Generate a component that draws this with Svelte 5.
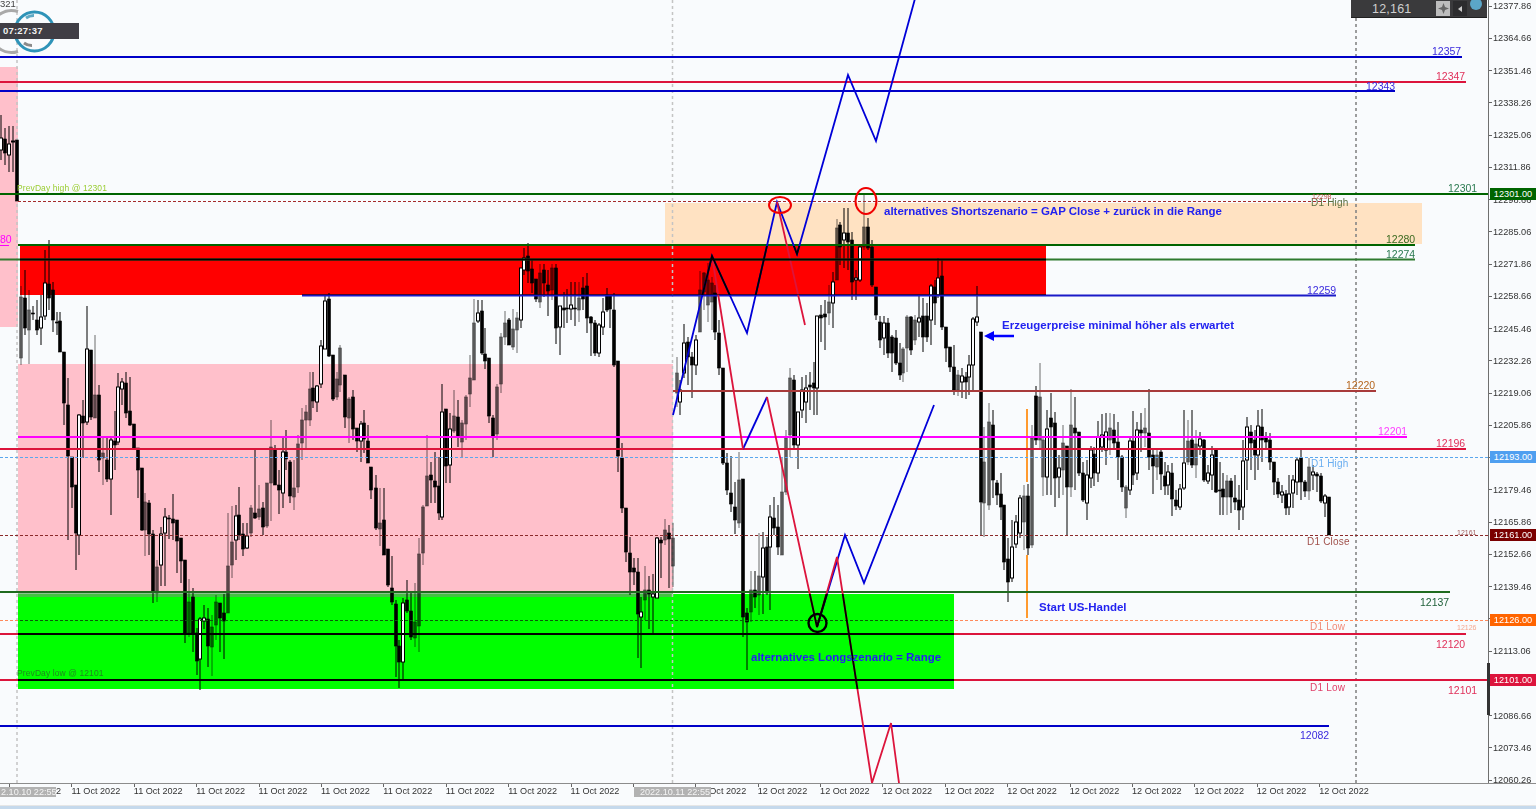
<script lang="ts">
// candles in chart pixels: [x, bodyTop, bodyBottom, kind, wickTop, wickBottom]
// kind 0 = bear (black), 1 = bull (hollow), 2 = grey
const raw: number[][] = [
	[1,138,150,1,115,160],[5,139,153,0,128,165],[9,144,155,1,126,172],[13,141,142,1,126,172],[17,140,201,0],
	[21,297,358,2,286,365],[25,298,328,0,270,335],[29,310,330,2,290,364],[33,313,314,0,306,320],[37,320,330,0,300,335],[41,317,328,1,295,345],[45,283,316,1,250,320],[49,284,298,0,240,310],[53,290,320,0,282,332],[57,322,323,0,312,335],[60,321,352,0,312,350],
	[64,352,403,0,352,425],[68,405,456,0,378,540],[72,457,487,0,457,508],[76,485,533,0,485,570],[79,415,535,1,414,555],[83,416,423,0,400,458],[87,349,422,1,306,425],[91,350,417,0,350,420],[95,395,418,2,335,418],[99,395,460,0,385,472],[103,453,458,2,438,485],[107,460,479,0,438,482],[111,440,479,1,438,515],[115,441,445,0,411,470],[118,387,442,1,373,445],[122,382,389,1,378,405],[126,383,413,0,372,418],[130,411,425,0,377,426],[134,424,448,0,424,450],[138,448,470,0,448,498],
	[142,468,530,0,468,531],[145,502,530,2,493,556],[149,503,534,0,500,555],[153,534,592,0,530,603],[157,567,593,2,560,602],[161,534,565,1,527,586],[165,517,533,1,508,586],[169,518,519,0,515,539],[173,519,523,0,494,540],[177,520,541,0,520,573],[181,538,561,0,538,583],[185,560,633,0,560,643],[189,602,633,2,579,637],[193,597,633,0,588,652],[197,633,661,0,628,675],[200,619,659,1,617,690],[204,618,621,1,605,629],[208,619,646,0,608,667],[212,627,647,2,615,676],[216,602,625,2,595,640],[220,603,618,0,603,652],[224,613,621,0,594,659],[228,566,613,2,513,613],[232,542,565,2,506,578],[236,516,540,1,505,560],[239,515,535,0,487,540],[243,534,549,0,523,556],[247,536,548,1,523,549],[251,508,533,2,505,537],[255,513,518,0,450,519],[259,509,517,2,485,520],[263,508,527,0,502,535],[267,483,526,2,483,528],[271,447,483,2,420,521],[275,449,485,0,445,485],[279,485,490,0,470,514],[283,452,493,1,437,508],[286,452,459,0,430,470],[290,462,496,0,460,503],[294,488,497,2,460,510],[298,444,487,2,435,493],[302,420,443,2,408,460],[306,412,420,2,405,450],
	[310,389,420,2,372,426],[313,388,401,0,372,408],[317,386,402,1,385,412],[321,346,384,1,340,388],[325,301,349,1,296,349],[329,299,356,0,293,357],[333,355,399,0,355,401],[337,379,397,2,372,400],[340,348,385,2,345,392],
	[345,375,417,0,375,428],[349,399,418,2,397,443],[353,397,429,0,390,440],[357,428,441,0,428,452],[361,424,441,1,421,462],[364,423,439,0,410,453],[368,441,463,0,425,463],
	[371,467,490,0,467,499],[376,488,528,0,475,530],[380,523,529,2,488,546],[384,520,555,0,488,555],[388,549,585,0,549,587],[392,588,602,0,556,605],[396,604,646,0,600,677],[399,646,662,0,640,688],[403,603,662,1,598,680],[407,600,611,0,580,613],[411,611,637,0,593,640],[415,622,638,2,583,647],[419,554,626,2,538,652],[423,507,553,2,505,565],[427,476,506,2,435,506],
	[431,475,480,0,462,503],[435,481,487,0,452,503],[439,486,513,0,457,520],[442,412,517,1,384,520],[446,409,466,0,409,483],[450,429,465,1,413,483],[454,416,431,2,390,433],[458,417,437,0,400,447],[462,423,442,2,420,457],[466,397,424,2,395,440],[470,378,394,2,355,407],[474,323,380,2,299,380],[478,313,321,1,300,323],[482,311,353,0,300,355],[485,354,361,0,328,369],[489,358,416,0,358,423],[493,418,436,0,415,457],[497,387,434,2,384,440],[501,337,384,2,333,393],[505,323,337,2,311,345],[509,320,345,0,318,345],[513,329,347,2,309,350],[517,318,330,2,312,353],[521,268,320,1,268,328],[524,258,270,1,248,275],[528,256,271,0,243,283],[532,269,283,0,259,293],[536,279,299,0,279,302],[540,273,302,2,264,308],[544,270,283,0,264,297],[548,285,291,0,270,316],[552,268,290,2,264,300],[556,268,328,0,264,344],[560,306,327,1,306,355],
	[564,308,310,0,292,328],[567,308,309,0,289,323],[571,305,309,1,282,320],[575,308,309,0,282,326],[579,298,310,2,282,322],[583,288,299,0,277,310],[587,286,318,0,273,333],[591,317,323,0,316,356],[595,323,353,0,320,356],[599,325,353,1,323,357],[603,312,327,1,298,335],[607,295,310,0,288,312],[610,296,309,0,296,328],[614,310,365,0,293,367],
	[618,361,456,0,361,472],[622,458,508,0,443,513],[626,508,552,0,508,562],[630,553,572,0,537,595],[634,568,572,0,558,585],[638,572,614,0,558,658],[641,612,617,1,597,668],[645,590,600,2,566,620],[649,590,594,0,576,629],[653,594,597,1,574,633],[657,538,598,1,537,598],[661,540,543,0,537,578],[665,530,540,2,519,545],[669,533,539,0,525,588],[673,538,566,2,523,587],
	[677,373,393,2,357,407],[680,390,402,1,380,415],[684,343,373,1,324,378],[688,342,357,0,337,385],[692,357,365,0,352,398],[696,340,365,1,335,375],[700,290,332,2,271,332],[704,273,292,2,272,310],[708,280,305,2,263,322],[712,283,302,2,277,330],[715,293,332,0,285,340],[719,333,368,0,320,375],
	[723,368,463,0,368,465],[727,463,490,0,453,495],[731,493,504,0,456,512],[735,507,520,0,482,534],[739,480,523,2,452,528],[743,479,617,0,479,637],[747,613,622,0,608,670],[751,590,612,2,571,622],[755,590,597,0,571,608],[759,576,595,2,533,615],[763,548,577,1,532,614],[767,547,593,0,537,595],[770,517,547,1,505,610],[774,518,528,0,497,535],[778,527,547,0,505,555],[782,492,555,2,457,555],[786,438,492,2,430,495],
	[790,378,435,2,368,457],[794,380,445,0,375,450],[798,412,445,1,412,469],[802,390,410,1,377,418],[806,388,402,1,375,423],[810,385,387,0,372,410],[814,383,388,0,362,415],[817,316,388,1,316,415],[821,315,318,0,305,342],[825,314,317,0,300,350],[829,302,313,2,285,325],[833,282,303,1,272,328],
	[837,228,280,2,219,280],[840,225,247,0,222,265],[844,233,240,1,208,268],[848,233,242,0,208,270],[852,240,282,0,232,300],[856,278,280,1,270,300],[860,247,280,1,245,282],[864,227,247,2,193,250],[868,227,248,0,218,250],[872,247,285,0,240,287],[876,287,315,0,287,320],
	[880,322,340,0,316,348],[884,323,338,1,316,355],[888,323,353,0,318,358],[892,337,353,0,335,372],[896,338,363,0,330,365],[900,363,375,0,343,380],[903,349,373,2,347,382],[907,317,348,2,315,372],[911,317,350,0,316,355],[915,320,340,2,315,345],[919,318,322,1,295,337],[923,316,337,0,298,352],[927,316,337,0,303,342],[931,286,320,1,284,345],[935,287,303,0,280,325],[938,278,295,1,258,298],[942,276,327,0,260,330],
	[946,327,348,0,327,362],[950,347,367,0,347,372],[954,367,390,0,345,395],[958,375,390,2,370,396],[962,376,382,1,368,398],[966,377,382,0,372,399],[969,365,377,1,355,395],[973,319,365,1,317,390],[977,317,322,1,286,326],
	[981,332,502,0,332,535],[984,462,503,2,427,537],[989,422,505,2,403,510],[993,425,480,0,410,498],[997,483,495,0,480,505],[1001,494,507,0,473,520],[1004,505,562,0,505,570],[1008,559,582,0,538,602],[1012,547,578,1,520,582],[1016,522,544,1,515,548],[1020,498,533,1,495,538],[1024,496,522,2,485,550],[1028,496,548,0,484,555],[1032,438,545,2,425,548],[1036,396,440,0,386,445],[1040,397,440,2,363,450],[1043,440,477,2,436,496],[1047,429,477,1,410,495],[1051,418,427,0,393,495],[1055,423,478,0,412,507],[1059,468,477,1,455,498],[1063,443,470,2,425,495],[1067,446,487,0,446,535],[1071,425,487,2,389,497],[1075,428,433,0,397,490],[1079,432,473,0,432,476],[1083,473,500,0,462,502],[1087,475,503,1,460,520],[1091,450,478,1,446,488],[1094,454,473,0,447,486],[1098,437,473,1,421,482],[1102,435,447,1,414,452],[1106,432,450,1,413,465],[1110,428,440,2,413,455],[1114,430,443,0,414,450],[1118,442,457,0,422,480],[1122,457,487,0,455,492],[1126,487,508,2,485,518],[1130,441,490,1,437,495],[1133,441,475,0,411,485],[1137,430,473,1,422,480],[1141,430,433,0,413,452],[1145,428,433,2,408,447],[1149,433,457,0,389,470],
	[1153,455,466,0,448,494],[1157,455,467,2,450,480],[1161,452,474,0,448,490],[1165,476,486,0,462,495],[1168,472,485,1,465,495],[1172,473,499,0,463,516],[1176,500,506,0,490,510],[1180,489,507,1,484,510],[1184,463,488,1,410,490],[1188,441,462,2,420,465],[1192,440,465,0,410,468],[1196,444,465,2,430,478],[1200,439,446,1,432,455],[1204,440,480,0,439,482],[1208,473,481,1,465,484],[1212,455,475,1,446,490],[1216,450,492,0,448,493],[1220,490,491,0,462,515],[1223,489,497,0,473,515],[1227,481,497,2,475,515],[1231,481,497,0,478,513],[1235,498,502,0,475,510],[1239,500,510,0,485,530],[1243,461,507,1,440,520],[1247,427,460,1,417,490],[1251,432,443,0,425,470],[1255,440,455,0,430,480],[1258,426,455,1,410,470],[1262,427,440,0,409,462],[1266,438,442,0,432,450],[1270,440,462,0,433,470],[1274,462,482,0,462,495],[1278,482,494,0,478,498],[1282,492,495,1,485,503],[1286,494,508,0,490,515],[1289,494,507,1,475,515],[1293,480,493,1,475,508],[1297,460,482,1,457,495],[1301,458,482,0,449,500],[1305,482,491,0,480,497],[1309,467,491,2,458,500],[1313,472,475,1,465,490],[1317,474,476,0,472,492],[1321,476,501,0,473,503],[1325,496,503,1,494,517],[1329,497,535,0,497,535]
];

const candles = raw.map(([x, top, bottom, kind, hi, lo]) => ({
	x,
	top,
	h: Math.max(bottom - top, 1),
	kind,
	hi: hi ?? top,
	lo: lo ?? bottom
}));

const levels = [
	{ y: 57, x1: 0, x2: 1462, color: '#0000c8', w: 2, label: '12357', lx: 1432, ly: 55, lc: '#3a2add' },
	{ y: 82, x1: 0, x2: 1466, color: '#dc143c', w: 2, label: '12347', lx: 1436, ly: 80, lc: '#e0305a' },
	{ y: 91, x1: 0, x2: 1395, color: '#0000c8', w: 2, label: '12343', lx: 1366, ly: 90, lc: '#3a2add' },
	{ y: 194, x1: 0, x2: 1488, color: '#006400', w: 2, label: '12301', lx: 1448, ly: 192, lc: '#2a7a50' },
	{ y: 245, x1: 18, x2: 1415, color: '#006400', w: 2, label: '12280', lx: 1386, ly: 243, lc: '#3c6a20' },
	{ y: 259.5, x1: 0, x2: 1415, color: '#2f7a2f', w: 2, label: '12274', lx: 1386, ly: 258, lc: '#2a7a50' },
	{ y: 295.5, x1: 302, x2: 1336, color: '#1a1ac8', w: 2, label: '12259', lx: 1307, ly: 294, lc: '#3a2add' },
	{ y: 391, x1: 673, x2: 1376, color: '#a83a3a', w: 2, label: '12220', lx: 1346, ly: 389, lc: '#b5651d' },
	{ y: 437, x1: 18, x2: 1407, color: '#ff00ff', w: 2, label: '12201', lx: 1378, ly: 435, lc: '#ff40ff' },
	{ y: 449, x1: 0, x2: 1466, color: '#dc143c', w: 2, label: '12196', lx: 1436, ly: 447, lc: '#e0305a' },
	{ y: 592, x1: 0, x2: 1450, color: '#1f6b1f', w: 2, label: '12137', lx: 1420, ly: 606, lc: '#20603a' },
	{ y: 634, x1: 0, x2: 1466, color: '#dc143c', w: 2, label: '12120', lx: 1436, ly: 648, lc: '#e0305a' },
	{ y: 680, x1: 0, x2: 1488, color: '#dc143c', w: 2, label: '12101', lx: 1448, ly: 694, lc: '#e0305a' },
	{ y: 726, x1: 0, x2: 1329, color: '#0000c8', w: 2, label: '12082', lx: 1300, ly: 739, lc: '#3a2add' }
];

const dashed = [
	{ y: 201.5, x1: 18, x2: 1330, color: '#a52a2a' },
	{ y: 457.5, x1: 0, x2: 1488, color: '#5aa7ee' },
	{ y: 535.5, x1: 0, x2: 1488, color: '#8b2a2a' },
	{ y: 620.5, x1: 0, x2: 1488, color: '#ff8a5c' }
];

const notes = [
	{ text: 'D1 High', x: 1311, y: 206, color: '#5a7040' },
	{ text: 'D1 High', x: 1311, y: 467, color: '#6aaef0' },
	{ text: 'D1 Close', x: 1307, y: 545, color: '#a0504a' },
	{ text: 'D1 Low', x: 1310, y: 630, color: '#f08a78' },
	{ text: 'D1 Low', x: 1310, y: 691, color: '#e0406a' }
];

const blueLeg1 = '673,415 712,256 747,333 777,202 797,254 848,75 876,141 916,-5';
const blueLeg2 = '743,449 767,397';
const blueLeg3 = '817,627 845,535 864,583 934,405';
const redLeg1 = '712,256 743,449';
const redLeg2 = '777,202 805,325';
const redLeg3 = '767,397 817,627 837,557 872,783 891,723 899,783';

const axisPrices = ['12377.86','12364.66','12351.46','12338.26','12325.06','12311.86','12298.66','12285.06','12271.86','12258.66','12245.46','12232.26','12219.06','12205.86','12192.66','12179.46','12165.86','12152.66','12139.46','12126.26','12113.06','12099.86','12086.66','12073.46','12060.26'];

const tags = [
	{ text: '12301.00', y: 188, cls: 'green' },
	{ text: '12193.00', y: 451, cls: 'sky' },
	{ text: '12161.00', y: 529, cls: 'maroon' },
	{ text: '12126.00', y: 614, cls: 'orange' },
	{ text: '12101.00', y: 674, cls: 'crimson' }
];

// first, 11th and 12th date sit under the grey time stamps
const dates = Array.from({ length: 22 }, (_, i) => {
	if (i === 0) return { text: '2', cls: 'tail' };
	if (i === 10) return { text: '', cls: '' };
	if (i === 11) return { text: 'Oct 2022', cls: 'cut' };
	return { text: i < 11 ? '11 Oct 2022' : '12 Oct 2022', cls: '' };
});
</script>

<div class="terminal">
	<div class="main">
		<svg class="chart" width="1488" height="783" viewBox="0 0 1488 783">
			<defs>
				<clipPath id="zones">
					<rect x="20" y="246" width="1026" height="49" />
					<rect x="18" y="594" width="936" height="95" />
				</clipPath>
			</defs>

			<!-- zones -->
			<rect x="0" y="67" width="18" height="260" fill="#ffc0cb" />
			<rect x="18" y="364" width="655" height="228" fill="#ffc0cb" />
			<rect x="665" y="203" width="757" height="41" fill="#ffe2c2" />
			<rect x="20" y="246" width="1026" height="49" fill="#ff0000" />
			<rect x="18" y="594" width="936" height="95" fill="#00ff00" />
			<rect x="18" y="593" width="655" height="4" fill="#5fa85f" opacity="0.7" />

			<!-- session separators -->
			<line class="sep light" x1="17" y1="0" x2="17" y2="783" />
			<line class="sep light" x1="672.5" y1="0" x2="672.5" y2="783" />
			<line class="sep dark" x1="1356" y1="0" x2="1356" y2="783" />

			<!-- candles -->
			{#each candles as c}
				<line class="wick" class:grey={c.kind === 2} x1={c.x} y1={c.hi} x2={c.x} y2={c.lo} />
				<rect
					class="body"
					class:bear={c.kind === 0}
					class:bull={c.kind === 1}
					class:grey={c.kind === 2}
					x={c.x - 1.5}
					y={c.top}
					width="3"
					height={c.h}
				/>
			{/each}

			<line class="us-open" x1="1027" y1="409" x2="1027" y2="482" />
			<line class="us-open" x1="1027" y1="555" x2="1027" y2="618" />

			<!-- levels -->
			{#each dashed as d}
				<line class="dash" x1={d.x1} y1={d.y} x2={d.x2} y2={d.y} stroke={d.color} />
			{/each}
			{#each levels as l}
				<line x1={l.x1} y1={l.y} x2={l.x2} y2={l.y} stroke={l.color} stroke-width={l.w} />
				<text class="level" x={l.lx} y={l.ly} fill={l.lc}>{l.label}</text>
			{/each}

			<!-- scenario lines -->
			<polyline class="leg" points={blueLeg1} stroke="#0000d8" />
			<polyline class="leg" points={blueLeg2} stroke="#0000d8" />
			<polyline class="leg" points={blueLeg3} stroke="#0000d8" />
			<polyline class="leg" points={redLeg1} stroke="#dc143c" />
			<polyline class="leg" points={redLeg2} stroke="#dc143c" />
			<polyline class="leg" points={redLeg3} stroke="#dc143c" />

			<!-- anything crossing the red and green zones turns black -->
			<g clip-path="url(#zones)">
				{#each levels as l}
					<line x1={l.x1} y1={l.y} x2={l.x2} y2={l.y} stroke="#000" stroke-width={l.w} />
				{/each}
				{#each dashed as d}
					<line class="dash" x1={d.x1} y1={d.y} x2={d.x2} y2={d.y} stroke="#0a5a0a" />
				{/each}
				<polyline class="leg" points={blueLeg1} stroke="#000" />
				<polyline class="leg" points={blueLeg3} stroke="#000" />
				<polyline class="leg" points={redLeg3} stroke="#000" />
			</g>

			<ellipse class="ring red" cx="780" cy="205" rx="11" ry="8" />
			<ellipse class="ring red" cx="866" cy="201" rx="10.5" ry="13" />
			<circle class="ring black" cx="817.5" cy="623" r="9" />

			<line x1="990" y1="336" x2="1014" y2="336" stroke="#0000ff" stroke-width="2.5" />
			<polygon points="984,336 994,331 994,341" fill="#0000ff" />

			<!-- broker logo -->
			<path class="logo" d="M18 11.5 A21 21 0 1 0 18 51.5" stroke="#a9a9a9" />
			<circle class="logo" cx="34.5" cy="31.5" r="19.5" stroke="#2e93b8" />
			<path d="M26 18 A13 13 0 0 1 34 15.5" fill="none" stroke="#5fa9c4" stroke-width="3" />
			<path d="M24 43 A13 13 0 0 0 32 45.5" fill="none" stroke="#8a8a8a" stroke-width="3" />

			<!-- notes -->
			<text class="strong" x="884" y="215">alternatives Shortszenario = GAP Close + zurück in die Range</text>
			<text class="strong" x="1002" y="329">Erzeugerpreise minimal höher als erwartet</text>
			<text class="strong" x="1039" y="611">Start US-Handel</text>
			<text class="strong" x="751" y="661">alternatives Longszenario = Range</text>

			{#each notes as n}
				<text class="note" x={n.x} y={n.y} fill={n.color}>{n.text}</text>
			{/each}
			<text class="tiny" x="1312" y="199" fill="#c0504a">12298</text>
			<text class="tiny" x="1457" y="535" fill="#a05a5a">12161</text>
			<text class="tiny" x="1457" y="630" fill="#f5a890">12126</text>
			<text class="prev" x="17" y="191" fill="#9acd32">PrevDay high @ 12301</text>
			<text class="prev" x="17" y="676" fill="#1f8a1f">PrevDay low @ 12101</text>
			<text class="level" x="0" y="243" fill="#ff00ff">80</text>
			<line x1="0" y1="245.5" x2="9" y2="245.5" stroke="#ff00ff" />
			<text class="axis-ish" x="0" y="7" fill="#444">321</text>
		</svg>

		<div class="price-axis">
			{#each axisPrices as p}
				<span class="price">{p}</span>
			{/each}
			<i class="volume-bar"></i>
			{#each tags as t}
				<span class="tag {t.cls}" style="top: {t.y}px">{t.text}</span>
			{/each}
		</div>

		<div class="clock">07:27:37</div>
		<div class="quote">
			<span class="quote-value">12,161</span>
			<span class="btn light">
				<svg width="13" height="13" viewBox="0 0 13 13"><path d="M6.5 1 L8 5 L12 6.5 L8 8 L6.5 12 L5 8 L1 6.5 L5 5 Z" fill="#666" /></svg>
			</span>
			<span class="btn">
				<svg width="8" height="8" viewBox="0 0 8 8"><path d="M6 1 V7 L2 4 Z" fill="#ccc" /></svg>
			</span>
			<span class="dot"></span>
		</div>
	</div>

	<div class="time-axis">
		{#each dates as d}
			<span class="date {d.cls}">{d.text}</span>
		{/each}
		<span class="stamp first">2.10.10 22:55</span>
		<span class="stamp second">2022.10.11 22:55</span>
	</div>

	<div class="status"></div>
</div>

<style>
	:global(body) {
		margin: 0;
		background: #f9fbfd;
		overflow: hidden;
	}

	.terminal {
		position: relative;
		width: 1536px;
		height: 809px;
		display: flex;
		flex-direction: column;
		overflow: hidden;
		font-family: 'Liberation Sans', Arial, sans-serif;
		background: #f9fbfd;
	}

	.main {
		position: relative;
		display: flex;
		height: 783px;
		flex: none;
		border-bottom: 1px solid #8c8c8c;
	}

	.chart {
		display: block;
		flex: none;
		overflow: hidden;
	}

	.sep {
		stroke-dasharray: 3 3;
	}
	.sep.light {
		stroke: #c4c4c4;
		stroke-width: 1.5;
	}
	.sep.dark {
		stroke: #858585;
		stroke-width: 1.6;
	}

	.wick {
		stroke: #000;
		stroke-width: 1;
	}
	.wick.grey {
		stroke: #6e6e6e;
		mix-blend-mode: multiply;
	}
	.body.bear {
		fill: #000;
		stroke: #000;
		stroke-width: 0.6;
	}
	.body.bull {
		fill: #fbfcfe;
		stroke: #000;
		stroke-width: 1;
	}
	.body.grey {
		fill: #7f7f7f;
		stroke: #5a5a5a;
		stroke-width: 0.6;
		mix-blend-mode: multiply;
	}

	.us-open {
		stroke: #ff9a2e;
		stroke-width: 2;
	}
	.dash {
		stroke-width: 1;
		stroke-dasharray: 3 2;
	}
	.leg {
		fill: none;
		stroke-width: 1.8;
	}
	.ring {
		fill: none;
		stroke-width: 2;
	}
	.ring.red {
		stroke: #f00000;
	}
	.ring.black {
		stroke: #000;
		stroke-width: 2.4;
	}
	.logo {
		fill: none;
		stroke-width: 3;
	}

	.level {
		font-size: 10.5px;
	}
	.strong {
		font-size: 11.5px;
		font-weight: 700;
		fill: #2222f0;
	}
	.note {
		font-size: 10px;
		letter-spacing: 0.2px;
	}
	.tiny {
		font-size: 7px;
	}
	.prev {
		font-size: 8.5px;
		letter-spacing: 0.1px;
	}
	.axis-ish {
		font-size: 9.5px;
	}

	.price-axis {
		position: relative;
		width: 48px;
		flex: none;
		border-left: 1px solid #6f6f6f;
		margin-top: -10px;
		display: grid;
		grid-auto-rows: 32.25px;
		height: 793px;
	}
	.price {
		display: flex;
		align-items: center;
		padding-left: 4px;
		font-size: 9.2px;
		color: #333;
	}
	.price::before {
		content: '';
		width: 3px;
		height: 1px;
		background: #666;
		margin-left: -4px;
		margin-right: 1px;
	}
	.tag {
		position: absolute;
		left: 1px;
		width: 46px;
		height: 12px;
		margin-top: 10px;
		font-size: 9.2px;
		line-height: 12px;
		text-align: center;
		color: #fff;
	}
	.tag.green {
		background: #006400;
	}
	.tag.sky {
		background: #4f9ff0;
	}
	.tag.maroon {
		background: #7a0000;
	}
	.tag.orange {
		background: #ff6400;
	}
	.tag.crimson {
		background: #dc143c;
	}
	.volume-bar {
		position: absolute;
		left: -2px;
		top: 673px;
		width: 3px;
		height: 52px;
		background: #333;
	}

	.clock {
		position: absolute;
		left: 0;
		top: 23px;
		width: 76px;
		height: 16px;
		padding-left: 3px;
		background: #403e45;
		color: #f2f2f2;
		font-size: 9.5px;
		font-weight: 700;
		line-height: 16px;
		letter-spacing: 0.2px;
	}

	.quote {
		position: absolute;
		left: 1351px;
		top: 0;
		width: 136px;
		height: 17px;
		display: flex;
		align-items: center;
		gap: 3px;
		background: #3a3a3c;
		border-bottom: 1px solid #1f1f1f;
	}
	.quote-value {
		width: 82px;
		padding-left: 21px;
		box-sizing: border-box;
		color: #cfcfcf;
		font-size: 12.5px;
		letter-spacing: 0.2px;
	}
	.btn {
		width: 14px;
		height: 15px;
		display: flex;
		align-items: center;
		justify-content: center;
		background: #2c2c2e;
	}
	.btn.light {
		background: #bdbdbd;
	}
	.dot {
		width: 12px;
		height: 12px;
		margin-top: -9px;
		border-radius: 50%;
		background: #5ba6c8;
	}

	.time-axis {
		position: relative;
		display: flex;
		padding-left: 9px;
		height: 20px;
		flex: none;
	}
	.date {
		position: relative;
		width: 62.4px;
		flex: none;
		padding-top: 1px;
		font-size: 9.1px;
		line-height: 13px;
		color: #333;
		white-space: nowrap;
	}
	.date.cut {
		text-indent: 14px;
	}
	.date.tail {
		text-indent: 47px;
	}
	.date::before {
		content: '';
		position: absolute;
		left: 0;
		top: 0;
		width: 1px;
		height: 3px;
		background: #666;
	}
	.stamp {
		position: absolute;
		top: 3px;
		height: 10px;
		background: #b2b2b2;
		color: #f4f4f4;
		font-size: 9.1px;
		line-height: 10px;
		white-space: nowrap;
		text-align: right;
		padding: 0 1px;
	}
	.stamp.first {
		left: 0;
		width: 54px;
	}
	.stamp.second {
		left: 634px;
		width: 75px;
	}

	.status {
		height: 5px;
		margin-top: 1px;
		background: #c5d9ec;
		border-top: 1px solid #e6e6e6;
	}
</style>
